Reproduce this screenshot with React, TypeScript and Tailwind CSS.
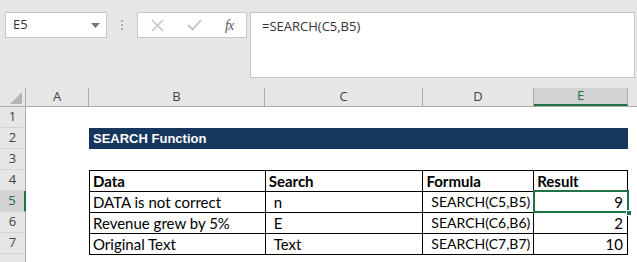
import React from 'react'

const cols = ['A', 'B', 'C', 'D', 'E']
const colW = ['w-[63px]', 'w-[176px]', 'w-[158px]', 'w-[111px]', 'w-[94px]']

const rows = [
  { data: 'DATA is not correct', search: 'n', formula: 'SEARCH(C5,B5)', result: '9' },
  { data: 'Revenue grew by 5%', search: 'E', formula: 'SEARCH(C6,B6)', result: '2' },
  { data: 'Original Text', search: 'Text', formula: 'SEARCH(C7,B7)', result: '10' },
]

const RowHead = ({ n, active = false }: { n: number; active?: boolean }) => (
  <div
    className={`w-[26px] h-[21px] shrink-0 flex items-center justify-center text-[13px] border-b border-[#d4d4d4] ${
      active
        ? 'bg-[#d2d2d2] text-[#217346] border-r-2 border-r-[#217346]'
        : 'bg-[#e6e6e6] text-[#444] border-r border-r-[#ababab]'
    }`}
  >
    {n < 8 ? n : ''}
  </div>
)

export default function App() {
  return (
    <div className="w-[637px] h-[262px] overflow-hidden bg-[#e6e6e6] relative font-['Open_Sans','Noto_Sans',sans-serif]">
      {/* Formula bar area */}
      <div className="h-[88px] pt-[12px] flex items-start">
        <div className="ml-[5px] w-[102px] h-[26px] bg-white border border-[#c6c6c6] flex items-center justify-between pl-[7px] pr-[6px]">
          <span className="text-[13px] text-[#333]">E5</span>
          <svg width="9" height="5" viewBox="0 0 9 5">
            <path d="M0 0h9L4.5 5z" fill="#777" />
          </svg>
        </div>
        <div className="w-[30px] h-[26px] flex flex-col items-center justify-center gap-[2px]">
          <span className="w-[2px] h-[2px] bg-[#b0b0b0]" />
          <span className="w-[2px] h-[2px] bg-[#b0b0b0]" />
          <span className="w-[2px] h-[2px] bg-[#b0b0b0]" />
        </div>
        <div className="w-[110px] h-[26px] bg-white border border-[#c6c6c6] flex items-center">
          <svg className="ml-[13px]" width="13" height="13" viewBox="0 0 13 13">
            <path d="M1 1l11 11M12 1L1 12" stroke="#c2c2c2" strokeWidth="1.4" />
          </svg>
          <svg className="ml-[23px]" width="15" height="12" viewBox="0 0 15 12">
            <path d="M1 6l4.5 4.5L14 1" stroke="#c2c2c2" strokeWidth="1.8" fill="none" />
          </svg>
          <span className="ml-[23px] text-[14px] italic text-[#555] font-['Liberation_Serif',serif] tracking-[-1px]">
            fx
          </span>
        </div>
        <div className="ml-[3px] mr-[2px] flex-1 h-[66px] bg-white border border-[#c6c6c6] pl-[11px] pt-[4px] text-[13px] text-[#333]">
          =SEARCH(C5,B5)
        </div>
      </div>

      {/* Column headers */}
      <div className="flex h-[19px] border-b border-[#ababab]">
        <div className="w-[26px] shrink-0 border-r border-[#ababab] flex items-end justify-end pr-[3px] pb-[2px]">
          <svg width="12" height="12" viewBox="0 0 12 12">
            <path d="M12 0v12H0z" fill="#b4b4b4" />
          </svg>
        </div>
        {cols.map((c, i) => (
          <div
            key={c}
            className={`${colW[i]} shrink-0 flex items-center justify-center text-[13px] border-r border-[#ababab] ${
              c === 'E' ? 'bg-[#d2d2d2] text-[#217346] border-b-2 border-b-[#217346]' : 'text-[#444]'
            }`}
          >
            {c}
          </div>
        ))}
        <div className="flex-1" />
      </div>

      {/* Sheet */}
      <div className="flex">
        <div className="flex flex-col">
          {[1, 2, 3, 4, 5, 6, 7, 8].map((n) => (
            <RowHead key={n} n={n} active={n === 5} />
          ))}
        </div>
        <div className="flex-1 bg-white font-['Lato','Open_Sans',sans-serif] text-[15px] text-black">
          <div className="h-[21px]" />
          <div className="h-[21px] flex">
            <div className="w-[63px]" />
            <div className="w-[539px] bg-[#17365d] text-white font-['Liberation_Sans',Arial,sans-serif] font-bold text-[13px] flex items-center pl-[4px]">
              SEARCH Function
            </div>
          </div>
          <div className="h-[21px]" />
          <div className="flex">
            <div className="w-[63px]" />
            <div className="w-[539px] border-t border-l border-black">
              <div className="flex h-[21px] font-bold">
                <div className="w-[176px] border-r border-b border-black pl-[3px] leading-[20px]">Data</div>
                <div className="w-[158px] border-r border-b border-black pl-[3px] leading-[20px]">Search</div>
                <div className="w-[111px] border-r border-b border-black pl-[3px] leading-[20px]">Formula</div>
                <div className="w-[94px] border-r border-b border-black pl-[3px] leading-[20px]">Result</div>
              </div>
              {rows.map((r) => (
                <div key={r.formula} className="flex h-[21px]">
                  <div className="w-[176px] border-r border-b border-black pl-[3px] leading-[20px]">{r.data}</div>
                  <div className="w-[158px] border-r border-b border-black pl-[8px] leading-[20px]">{r.search}</div>
                  <div className="w-[111px] border-r border-b border-black pl-[8px] leading-[20px] text-[14px] whitespace-nowrap">
                    {r.formula}
                  </div>
                  <div className="w-[94px] border-r border-b border-black pr-[4px] leading-[20px] text-right">
                    {r.result}
                  </div>
                </div>
              ))}
            </div>
          </div>
        </div>
      </div>

      {/* Active cell selection E5 */}
      <div className="absolute left-[533px] top-[190px] w-[96px] h-[23px] border-2 border-[#217346] pointer-events-none" />
      <div className="absolute left-[626px] top-[210px] w-[6px] h-[6px] bg-[#217346] border border-white pointer-events-none" />
    </div>
  )
}
